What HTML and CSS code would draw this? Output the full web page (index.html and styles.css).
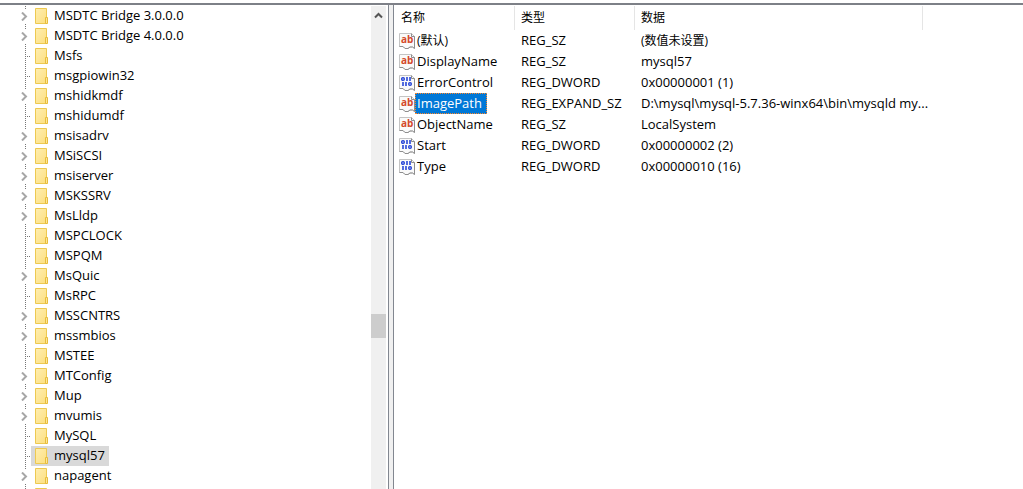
FILE: index.html
```
<!DOCTYPE html>
<html lang="zh-CN">
  <head>
    <meta charset="UTF-8" />
    <meta name="viewport" content="width=device-width, initial-scale=1.0" />
    <title>注册表编辑器</title>
    <link rel="stylesheet" href="styles.css">
  </head>
  <body>
    <svg class="symbols" aria-hidden="true">
      <defs>
        <linearGradient id="paper" x1="0" y1="0" x2="1" y2="1">
          <stop offset="0" stop-color="#ffeeb0" />
          <stop offset="1" stop-color="#fcdf80" />
        </linearGradient>
      </defs>
      <symbol id="folder" viewBox="0 0 13 16">
        <path d="M.5 .5h11v15h-11z" fill="url(#paper)" stroke="#edc951" />
        <path d="M10.5 9.5h2v6h-2z" fill="#ffe597" stroke="#e6bd3c" />
      </symbol>
      <symbol id="chevron" viewBox="0 0 7 9">
        <path d="M1 .5l4 4-4 4" fill="none" stroke="#a6a6a6" stroke-width="2" />
      </symbol>
      <symbol id="sheet" viewBox="0 0 16 16">
        <path d="M.5 .5h12l3 3v12l-2-1.5h-2.5l-2 1.5h-3l-2-2h-3.5z" fill="#fafafa" stroke="#c4c4c4" />
        <path d="M12.5 .5v3h3M15.5 3.5v12l-2-1.5h-2.5l-2 1.5h-3l-2-2h-3.5" fill="none" stroke="#8e8e8e" />
      </symbol>
      <symbol id="bits" viewBox="0 0 16 16">
        <g fill="none" stroke="#2a48d8" stroke-width="1.4">
          <rect x="2.7" y="2.7" width="2.6" height="2.6" rx="1" />
          <rect x="9.7" y="7.700" width="2.6" height="2.600" rx="1" />
        </g>
        <path d="M8 2v4M11 2v4M4 7v4M7 7v4" fill="none" stroke="#2a48d8" stroke-width="1.6" />
      </symbol>
    </svg>

    <main class="editor">
      <nav class="tree-pane">
        <ul class="tree" id="tree"></ul>
        <div class="scrollbar">
          <button class="scroll-up" type="button" aria-label="向上滚动">
            <svg width="9" height="7" viewBox="0 0 9 7"><path d="M1 5.5l3.5-3.5 3.5 3.5" fill="none" stroke="#555" stroke-width="2" /></svg>
          </button>
          <div class="track-before"></div>
          <div class="thumb"></div>
          <div class="track-after"></div>
        </div>
      </nav>
      <div class="splitter"></div>
      <section class="values-pane">
        <table class="values">
          <colgroup>
            <col class="col-name" />
            <col class="col-type" />
            <col class="col-data" />
            <col />
          </colgroup>
          <thead>
            <tr><th>名称</th><th>类型</th><th>数据</th><td></td></tr>
          </thead>
          <tbody id="values"></tbody>
        </table>
      </section>
    </main>

    <script>
      // [name, has children]
      const keys = [
        ["MSDTC Bridge 3.0.0.0", true],
        ["MSDTC Bridge 4.0.0.0", true],
        ["Msfs", false],
        ["msgpiowin32", false],
        ["mshidkmdf", true],
        ["mshidumdf", false],
        ["msisadrv", true],
        ["MSiSCSI", true],
        ["msiserver", true],
        ["MSKSSRV", true],
        ["MsLldp", true],
        ["MSPCLOCK", false],
        ["MSPQM", false],
        ["MsQuic", true],
        ["MsRPC", false],
        ["MSSCNTRS", true],
        ["mssmbios", true],
        ["MSTEE", false],
        ["MTConfig", true],
        ["Mup", true],
        ["mvumis", true],
        ["MySQL", false],
        ["mysql57", false],
        ["napagent", true],
        ["", false],
      ];
      const selectedKey = "mysql57";

      const values = [
        ["(默认)", "REG_SZ", "(数值未设置)"],
        ["DisplayName", "REG_SZ", "mysql57"],
        ["ErrorControl", "REG_DWORD", "0x00000001 (1)"],
        ["ImagePath", "REG_EXPAND_SZ", "D:\\mysql\\mysql-5.7.36-winx64\\bin\\mysqld my..."],
        ["ObjectName", "REG_SZ", "LocalSystem"],
        ["Start", "REG_DWORD", "0x00000002 (2)"],
        ["Type", "REG_DWORD", "0x00000010 (16)"],
      ];
      const selectedValue = "ImagePath";

      // Chinese text is set one size smaller than Latin
      function text(value) {
        return /[\u4e00-\u9fff]/.test(value) ? `<span class="cjk">${value}</span>` : value;
      }

      document.getElementById("tree").innerHTML = keys
        .map(([name, parent]) => {
          const toggle = parent
            ? `<button class="toggle" type="button" aria-label="展开 ${name}"><svg width="7" height="9"><use href="#chevron" /></svg></button>`
            : `<span class="branch"></span>`;
          const selected = name === selectedKey ? " selected" : "";
          return `<li class="node"><span class="line">${toggle}</span><span class="key${selected}"><svg width="13" height="16"><use href="#folder" /></svg><span class="key-name">${name}</span></span></li>`;
        })
        .join("");

      document.getElementById("values").innerHTML = values
        .map(([name, type, data]) => {
          const glyph = type === "REG_DWORD"
            ? `<use href="#bits" />`
            : `<text class="glyph-ab" x="2" y="10">ab</text>`;
          const selected = name === selectedValue ? " selected" : "";
          return `<tr><td><div class="value-name"><svg width="16" height="16" viewBox="0 0 16 16"><use href="#sheet" />${glyph}</svg><span class="label${selected}">${text(name)}</span></div></td><td>${type}</td><td>${text(data)}</td><td></td></tr>`;
        })
        .join("");
    </script>
  </body>
</html>
```

FILE: styles.css
```
* {
  box-sizing: border-box;
}
body {
  margin: 0;
  height: 100vh;
  overflow: hidden;
  padding-top: 3px;
  background: #fff;
  color: #000;
  font-family: "Open Sans", "Noto Sans CJK SC", sans-serif;
  font-size: 13px;
  line-height: 20px;
}
button {
  border: 0;
  padding: 0;
  background: none;
}
svg {
  display: block;
  flex: none;
}
.symbols {
  position: absolute;
  width: 0;
  height: 0;
}
.editor {
  display: flex;
  height: 100%;
  border-top: 2px solid #7d8087;
}

/* key tree */
.tree-pane {
  display: flex;
  flex: 0 0 389px;
  padding-right: 2px;
  border-right: 1px solid #828790;
  overflow: hidden;
}
.tree {
  flex: 1;
  margin: 0;
  padding: 1px 0 0 18px;
  list-style: none;
  overflow: hidden;
}
.node {
  display: flex;
  height: 20px;
}
.line {
  display: flex;
  align-items: center;
  width: 13px;
  background: repeating-linear-gradient(#777 0 1px, transparent 1px 2px) 7px 0 / 1px 100% no-repeat;
}
.toggle {
  display: flex;
  align-items: center;
  justify-content: center;
  width: 13px;
  height: 14px;
  background: #fff;
}
.branch {
  width: 6px;
  height: 1px;
  margin-left: 7px;
  background: repeating-linear-gradient(90deg, #777 0 1px, transparent 1px 2px);
}
.key {
  display: flex;
  align-items: center;
  gap: 6px;
  padding: 0 4px;
  white-space: nowrap;
}
.key-name {
  line-height: 18px;
  padding-bottom: 2px;
}
.key.selected {
  background: #d9d9d9;
}

.scrollbar {
  display: flex;
  flex-direction: column;
  width: 15px;
  margin-top: 1px;
  background: #f0f0f0;
}
.scroll-up {
  display: flex;
  align-items: center;
  justify-content: center;
  height: 18px;
}
.track-before {
  flex: 290;
}
.thumb {
  height: 24px;
  background: #cdcdcd;
}
.track-after {
  flex: 151;
}
.splitter {
  flex: 0 0 4px;
  background: #f0f0f0;
}

/* value list */
.values-pane {
  flex: 1;
  min-width: 0;
  border-left: 1px solid #828790;
  overflow: hidden;
}
.values {
  width: 100%;
  margin-top: 1px;
  table-layout: fixed;
  border-collapse: separate;
  border-spacing: 0;
}
.col-name {
  width: 121px;
}
.col-type {
  width: 120px;
}
.col-data {
  width: 288px;
}
.values th {
  height: 24px;
  padding: 0 6px;
  border-right: 1px solid #e5e5e5;
  font-size: 12px;
  font-weight: normal;
  text-align: left;
}
.values th:first-child {
  padding-left: 7px;
}
.values td {
  height: 21px;
  padding: 0 6px;
  line-height: 21px;
  white-space: nowrap;
}
.values td:first-child {
  padding: 0 0 0 5px;
}
.value-name {
  display: flex;
  align-items: center;
}
.label {
  padding: 0 5px 0 2px;
}
.label.selected {
  background: #0078d7;
  color: #fff;
  outline: 1px dotted #ff8728;
  outline-offset: -1px;
}
.cjk {
  font-size: 12px;
}
.glyph-ab {
  fill: #d4492a;
  font-family: "Open Sans", sans-serif;
  font-size: 10px;
  font-weight: bold;
}
```
